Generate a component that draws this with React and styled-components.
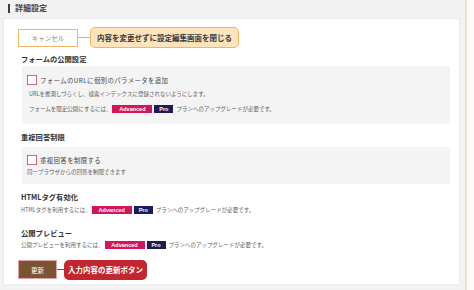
import React from "react";
import styled, { createGlobalStyle } from "styled-components";

const GlobalStyle = createGlobalStyle`
  html, body { margin: 0; padding: 0; }
  body {
    background: #f2f2f2;
    font-family: "Noto Sans CJK JP", "Noto Sans", sans-serif;
    color: #333;
  }
`;

const Page = styled.div`
  display: flex;
  width: 474px;
  height: 290px;
  overflow: hidden;
`;

const Main = styled.div`
  width: 467px;
  display: flex;
  flex-direction: column;
`;

const SideRule = styled.div`
  width: 7px;
  border-left: 2px solid #f0e2d2;
  margin-left: 1px;
  background: #fcfbfa;
`;

const Header = styled.div`
  height: 18px;
  display: flex;
  align-items: center;
  padding-left: 8px;
  padding-bottom: 2px;
  box-sizing: border-box;
`;

const TitleBar = styled.span`
  width: 2px;
  height: 9px;
  background: #4a3a2a;
  margin-right: 5px;
`;

const Title = styled.span`
  font-size: 8px;
  font-weight: 700;
  color: #444;
  line-height: 1;
`;

const Panel = styled.div`
  margin: 0 4px 0 3px;
  height: 267px;
  box-sizing: border-box;
  background: #fff;
  border: 1px solid #ececec;
  padding: 7px 9px 0 14px;
  display: flex;
  flex-direction: column;
`;

const ActionRow = styled.div`
  display: flex;
  align-items: center;
  height: 21px;
  margin-top: ${(p) => p.$mt || 0}px;
`;

const Button = styled.div`
  box-sizing: border-box;
  width: ${(p) => p.$w}px;
  height: ${(p) => p.$h}px;
  display: flex;
  align-items: center;
  justify-content: center;
  font-size: 6.5px;
  background: ${(p) => p.$bg};
  color: ${(p) => p.$fg};
  border: ${(p) => p.$border};
`;

const Connector = styled.span`
  width: ${(p) => p.$w}px;
  height: 1px;
  background: ${(p) => p.$color};
`;

const Callout = styled.div`
  box-sizing: border-box;
  height: ${(p) => p.$h}px;
  padding: 0 ${(p) => p.$px}px;
  display: flex;
  align-items: center;
  border-radius: 5px;
  font-size: 7.5px;
  font-weight: 700;
  white-space: nowrap;
  background: ${(p) => p.$bg};
  color: ${(p) => p.$fg};
  border: ${(p) => p.$border};
`;

const Heading = styled.div`
  font-size: 7.3px;
  font-weight: 700;
  line-height: 10px;
  height: 10px;
  color: #333;
  padding-left: 3px;
  margin-top: ${(p) => p.$mt}px;
`;

const Box = styled.div`
  background: #f4f4f4;
  margin-left: 4px;
  padding: ${(p) => p.$pt}px 5px ${(p) => p.$pb}px 5px;
  margin-top: ${(p) => p.$mt}px;
  display: flex;
  flex-direction: column;
`;

const CheckRow = styled.div`
  display: flex;
  align-items: center;
  height: 10px;
`;

const CheckBox = styled.span`
  box-sizing: border-box;
  width: 10px;
  height: 10px;
  border: 1px solid #c86a78;
  background: #fff;
  margin-right: 3px;
`;

const CheckLabel = styled.span`
  font-size: 6.4px;
  letter-spacing: 0.4px;
  color: #444;
  white-space: nowrap;
`;

const Note = styled.div`
  display: flex;
  align-items: center;
  font-size: 5.5px;
  color: #606060;
  white-space: nowrap;
  height: ${(p) => p.$h || 8}px;
  margin-top: ${(p) => p.$mt || 0}px;
  padding-left: ${(p) => p.$pl || 0}px;
`;

const Badge = styled.span`
  display: inline-flex;
  align-items: center;
  justify-content: center;
  height: 8px;
  width: ${(p) => p.$w}px;
  background: ${(p) => p.$bg};
  color: #fff;
  font-family: "Liberation Sans", Arial, sans-serif;
  font-size: 5.5px;
  font-weight: 700;
  margin: 0 ${(p) => p.$mr}px 0 ${(p) => p.$ml}px;
`;

const Upgrade = ({ lead, mt }) => (
  <Note $h={10} $mt={mt} $pl={lead.pl}>
    {lead.text}
    <Badge $w={40} $bg="#d4145c" $ml={1} $mr={2}>Advanced</Badge>
    <Badge $w={19} $bg="#1d1b5a" $ml={0} $mr={3}>Pro</Badge>
    プランへのアップグレードが必要です。
  </Note>
);

export default function App() {
  return (
    <>
      <GlobalStyle />
      <Page>
        <Main>
          <Header>
            <TitleBar />
            <Title>詳細設定</Title>
          </Header>
          <Panel>
            <ActionRow $mt={1}>
              <Button $w={60} $h={18} $bg="#fff" $fg="#888" $border="1.5px solid #f0b565">
                キャンセル
              </Button>
              <Connector $w={12} $color="#eeaa55" />
              <Callout $h={21} $px={6} $bg="#fde4bd" $fg="#3a3a3a" $border="1px solid #f0b565">
                内容を変更せずに設定編集画面を閉じる
              </Callout>
            </ActionRow>

            <Heading $mt={6}>フォームの公開設定</Heading>
            <Box $mt={2} $pt={9} $pb={10}>
              <CheckRow>
                <CheckBox />
                <CheckLabel>フォームのURLに個別のパラメータを追加</CheckLabel>
              </CheckRow>
              <Note $mt={5} $pl={2}>URLを推測しづらくし、検索インデックスに登録されないようにします。</Note>
              <Upgrade lead={{ text: "フォームを限定公開にするには、", pl: 2 }} mt={6} />
            </Box>

            <Heading $mt={8}>重複回答制限</Heading>
            <Box $mt={5} $pt={8} $pb={8}>
              <CheckRow>
                <CheckBox />
                <CheckLabel>重複回答を制限する</CheckLabel>
              </CheckRow>
              <Note $mt={3} $pl={0}>同一ブラウザからの回答を制限できます</Note>
            </Box>

            <Heading $mt={8}>HTMLタグ有効化</Heading>
            <Upgrade lead={{ text: "HTMLタグを利用するには、", pl: 3 }} mt={3} />

            <Heading $mt={13}>公開プレビュー</Heading>
            <Upgrade lead={{ text: "公開プレビューを利用するには、", pl: 3 }} mt={2} />

            <ActionRow $mt={9}>
              <Button $w={39} $h={19} $bg="#7a5430" $fg="#fff" $border="1.5px solid #e3a0a8">
                更新
              </Button>
              <Connector $w={7} $color="#c0282f" />
              <Callout $h={20} $px={4} $bg="#c3262e" $fg="#fff" $border="none">
                入力内容の更新ボタン
              </Callout>
            </ActionRow>
          </Panel>
        </Main>
        <SideRule />
      </Page>
    </>
  );
}
